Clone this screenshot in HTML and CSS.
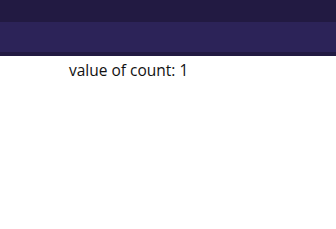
FILE: index.html
```html
<!DOCTYPE html>
<html lang="en">
  <head>
    <meta charset="UTF-8" />
    <meta name="viewport" content="width=device-width, initial-scale=1.0" />
    <title>Counter</title>
    <link rel="stylesheet" href="styles.css">
  </head>
  <body>
    <!-- Header -->
    <div class="header">
      <div class="header-top"></div>
      <div class="header-bar"></div>
      <div class="header-bottom"></div>
    </div>
    <!-- Content -->
    <div class="content">
      <p class="count-text">value of count: 1</p>
    </div>
  </body>
</html>
```

FILE: styles.css
```css
* {
  margin: 0;
  padding: 0;
  box-sizing: border-box;
}
body {
  font-family: "Open Sans", "Noto Sans", sans-serif;
  background-color: #fff;
  color: #111;
}
/* Header */
.header-top {
  height: 22px;
  background-color: #221a42;
}
.header-bar {
  height: 30px;
  background-color: #2c2358;
}
.header-bottom {
  height: 4px;
  background-color: #221a42;
}
/* Content */
.content {
  padding: 4px 0 0 69px;
}
.count-text {
  font-size: 15.5px;
  line-height: 21px;
}
```
